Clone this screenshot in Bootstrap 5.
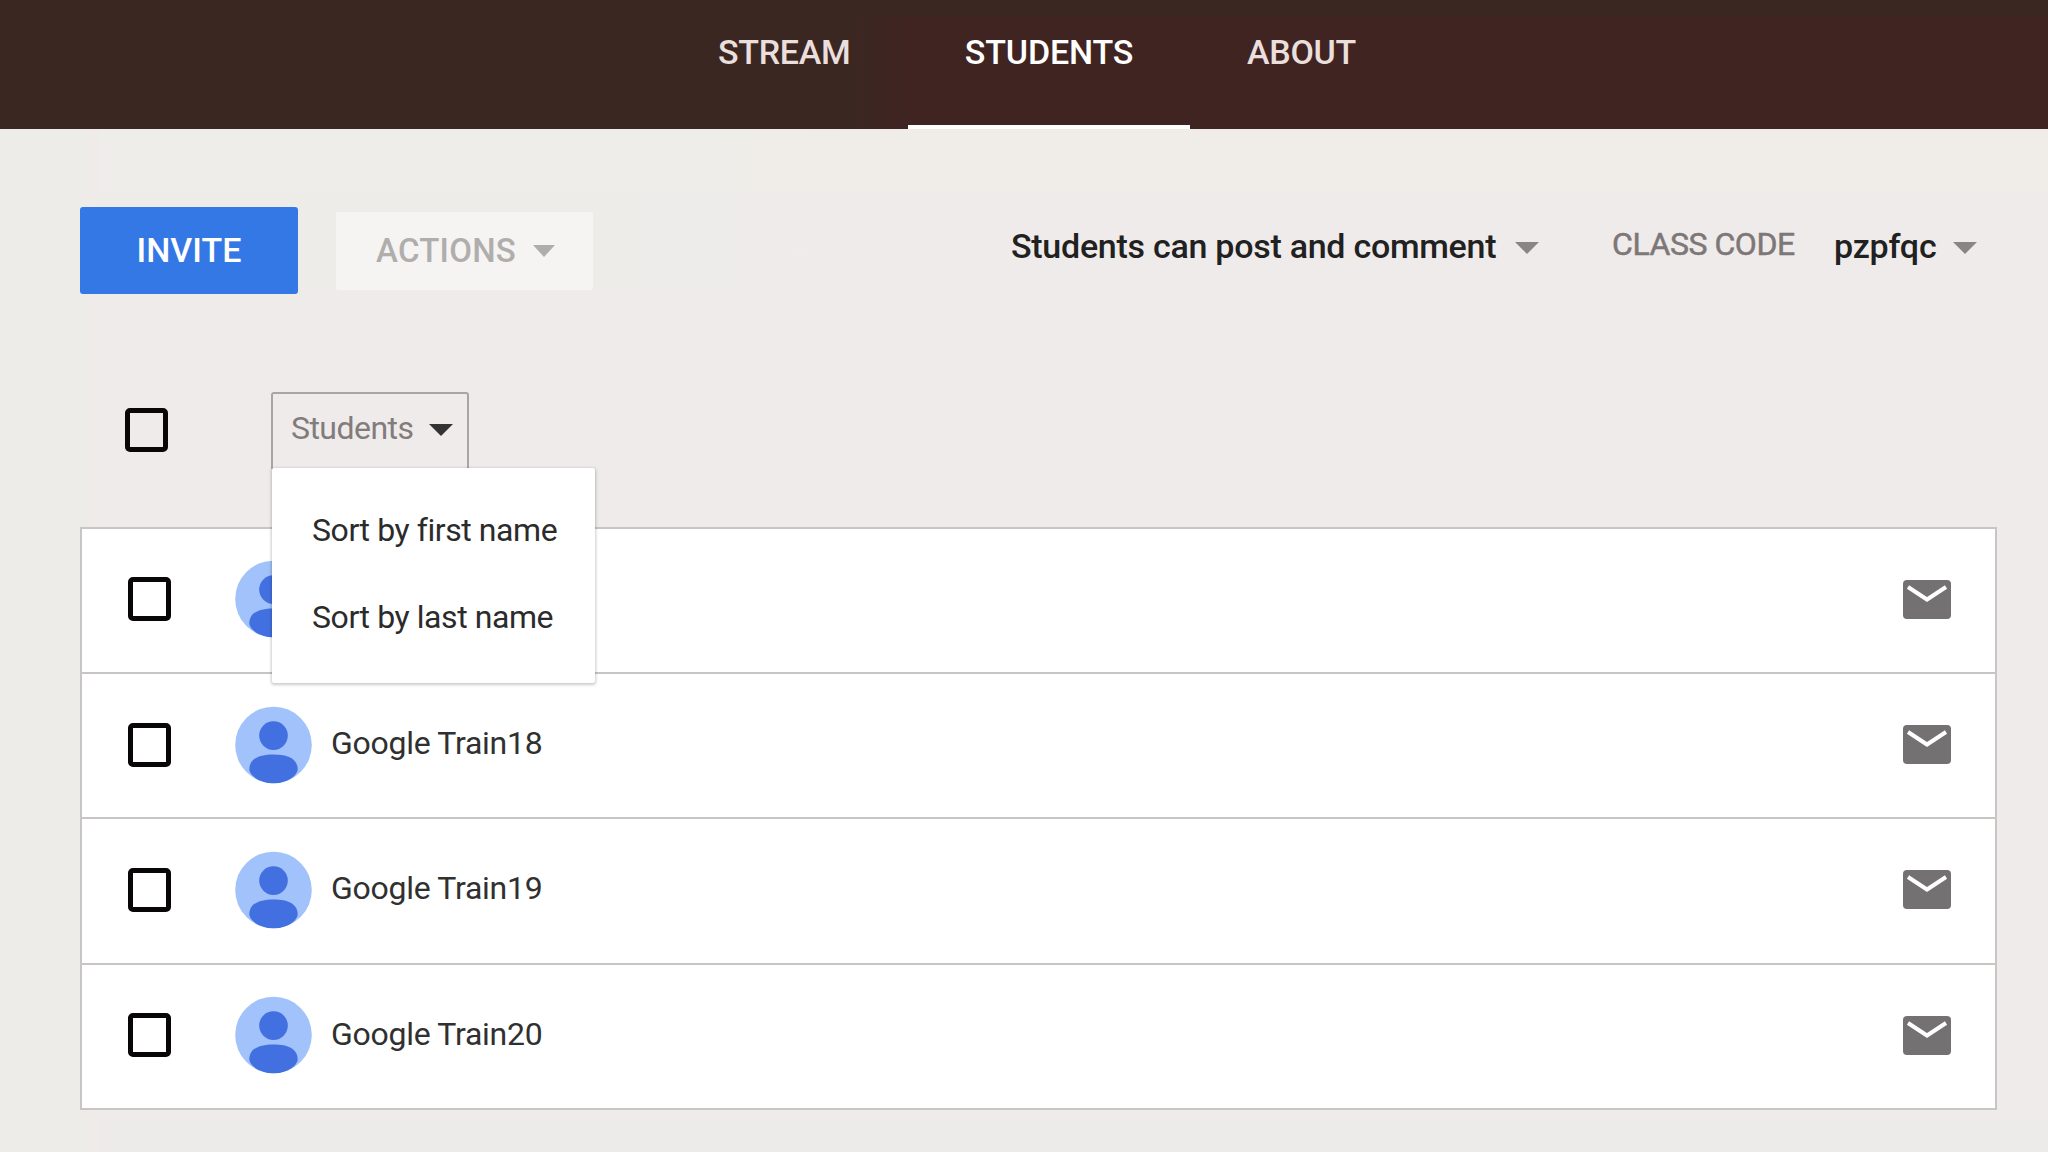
<!DOCTYPE html>
<html lang="en">
<head>
<meta charset="utf-8">
<meta name="viewport" content="width=device-width, initial-scale=1">
<title>Students</title>
<link href="https://cdn.jsdelivr.net/npm/bootstrap@5.3.0/dist/css/bootstrap.min.css" rel="stylesheet">
<style>
body{font-family:Roboto,"Noto Sans",sans-serif;background:#efebea;color:#212121;height:1152px;overflow:hidden;line-height:1}
.page-wrap{height:1152px;background:
linear-gradient(90deg,#edece8 0,#edece8 76px,#efebea 100px) 0 0/100px 100% no-repeat,
linear-gradient(90deg,#eeede9 0,#eeede9 600px,#f0ece7 940px) 0 129px/100% 62px no-repeat,
linear-gradient(90deg,#edece9 0,#edece9 600px,#efebea 900px) 0 191px/900px 110px no-repeat,
linear-gradient(#edebe9,#edebe9) 0 1120px/100% 32px no-repeat,#efebea}
.topbar{height:129px;background:linear-gradient(#3a2721,#3a2721) 0 0/100% 16px no-repeat,linear-gradient(90deg,#3b2722 0,#3b2722 850px,#3f2422 910px);padding-left:718px}
.topbar .nav-link{font-size:34px;font-weight:500;line-height:40px;letter-spacing:-.3px;color:#eadfdc;padding:32px 0 0;height:129px;white-space:nowrap;border-radius:0}
.topbar .nav-link.active{color:#fff;letter-spacing:-.15px;border-bottom:4px solid #fff}
.tab-stream{width:190px}.tab-students{width:282px}.tab-about{padding-left:57px!important}
.tab-students{text-align:center}
.toolbar-row{height:87px;margin:78px 0 0 80px}
.btn-invite{width:218px;height:87px;border:0;border-radius:3px;background:#3478e6;color:#fff;font-size:34px;font-weight:500;padding:0;line-height:87px}
.btn-actions{width:257px;height:78px;margin-left:38px;border:0;border-radius:2px;background:#f5f4f2!important;color:#b0aeac!important;font-size:33px;font-weight:500;letter-spacing:.25px;opacity:1!important;padding:0 0 0 40px;line-height:78px}
.caret-ico{display:block;width:24px;height:12px;flex:none}
.caret-sm{width:22px;margin-left:1px}
.actions-text{width:156px;text-align:left}
.txt{white-space:nowrap;display:block;flex:none}
.tool-side{height:87px;padding-bottom:7px}
.perm{width:504px;margin-left:418px;font-size:34px;font-weight:500;letter-spacing:-.27px}
.code-lab{width:222px;margin-left:73px;padding-bottom:6px;font-size:32px;color:#7d7777;letter-spacing:-.45px;-webkit-text-stroke:.5px #7d7777}
.code-val{width:119px;font-size:34px;font-weight:500;letter-spacing:-.2px}
.perm,.code-lab,.code-val{line-height:40px}
.perm,.code-val{padding-bottom:2px}
.tool-side .caret-ico{color:#8a8585;margin-top:1px}
.cb{width:43px;height:44px;border:5px solid #080606;border-radius:5px;flex:none}
.sort-row{height:134.500px;margin-top:98px;padding-left:125px}
.sort-row .cb{margin-top:16px}
.sort-wrap{margin-left:103px}
.sort-box{width:198px;height:77px;border:2px solid #aaa5a5;border-bottom:0;border-radius:3px 3px 0 0;padding:0 14px 7px 18px;font-size:32px;letter-spacing:-.55px;color:#827c7c}
.sort-box .caret-ico{color:#333;margin-top:3px}
.sort-menu{top:76px;left:1px;width:323px;height:215px;background:#fff;border:0;border-radius:2px;box-shadow:0 1px 3px 1px rgba(0,0,0,.2);padding:19px 0;z-index:5}
.sort-menu .dropdown-item{font-size:32px;height:87px;line-height:87px;letter-spacing:-.43px;padding:0 0 0 40px;color:#2b2b2b}
.roster{margin-left:80px;width:1917px;border:2px solid #c9c5c5;border-radius:0;background:#fff}
.roster .list-group-item{height:145.400px;border:0;border-bottom:2px solid #c9c5c5;padding:0 44px 2px 46px;background:#fff}
.roster .list-group-item:last-child{border-bottom:0;height:143.400px}
.ava{width:77px;height:78px;margin-left:64px;flex:none}
.nm{font-size:32px;margin-left:19px;color:#303030;line-height:40px;letter-spacing:-.28px;padding-bottom:3px}
.mail{width:48px;height:39px;margin-left:auto;flex:none}
</style>
</head>
<body>
<svg width="0" height="0" class="position-absolute"><defs>
<symbol id="ava" viewBox="0 0 78 78"><clipPath id="c"><circle cx="39" cy="39" r="39"/></clipPath><circle cx="39" cy="39" r="38.800" fill="#a1c2fa"/><g clip-path="url(#c)" fill="#4270e0"><circle cx="39" cy="29.500" r="14.500"/><path d="M14.500 64C14.500 53 24 48.500 39 48.500S63.500 53 63.500 64C62 72 50 78 39 78S16 72 14.500 64Z"/></g></symbol>
<symbol id="mail" viewBox="0 0 48 39"><rect width="48" height="39" rx="4" fill="#737171"/><path d="M5 7 24 19.500 43 7" fill="none" stroke="#fff" stroke-width="4"/></symbol>
<symbol id="dn" viewBox="0 0 24 12" preserveAspectRatio="none"><path d="M0 0H24L12 12Z" fill="currentColor"/></symbol>
</defs></svg>
<div class="page-wrap">
<nav class="topbar nav flex-nowrap">
<a class="nav-link tab-stream">STREAM</a><a class="nav-link tab-students active">STUDENTS</a><a class="nav-link tab-about">ABOUT</a>
</nav>
<div class="toolbar-row d-flex align-items-center">
<button class="btn btn-primary btn-invite">INVITE</button>
<button class="btn btn-light btn-actions d-flex align-items-center" disabled><span class="txt actions-text">ACTIONS</span><svg class="caret-ico caret-sm"><use href="#dn"/></svg></button>
<div class="tool-side d-flex align-items-center">
<span class="txt perm">Students can post and comment</span><svg class="caret-ico"><use href="#dn"/></svg>
<span class="txt code-lab">CLASS CODE</span><span class="txt code-val">pzpfqc</span><svg class="caret-ico"><use href="#dn"/></svg>
</div>
</div>
<div class="sort-row d-flex align-items-start">
<div class="cb"></div>
<div class="dropdown sort-wrap"><div class="sort-box d-flex align-items-center justify-content-between"><span class="txt">Students</span><svg class="caret-ico"><use href="#dn"/></svg></div>
<div class="dropdown-menu show sort-menu"><a class="dropdown-item">Sort by first name</a><a class="dropdown-item">Sort by last name</a></div></div>
</div>
<div class="list-group roster">
<div class="list-group-item d-flex align-items-center"><div class="cb"></div><svg class="ava"><use href="#ava"/></svg><svg class="mail"><use href="#mail"/></svg></div>
<div class="list-group-item d-flex align-items-center"><div class="cb"></div><svg class="ava"><use href="#ava"/></svg><span class="txt nm">Google Train18</span><svg class="mail"><use href="#mail"/></svg></div>
<div class="list-group-item d-flex align-items-center"><div class="cb"></div><svg class="ava"><use href="#ava"/></svg><span class="txt nm">Google Train19</span><svg class="mail"><use href="#mail"/></svg></div>
<div class="list-group-item d-flex align-items-center"><div class="cb"></div><svg class="ava"><use href="#ava"/></svg><span class="txt nm">Google Train20</span><svg class="mail"><use href="#mail"/></svg></div>
</div>
</div>
<script src="https://cdn.jsdelivr.net/npm/bootstrap@5.3.0/dist/js/bootstrap.bundle.min.js"></script>
</body>
</html>
